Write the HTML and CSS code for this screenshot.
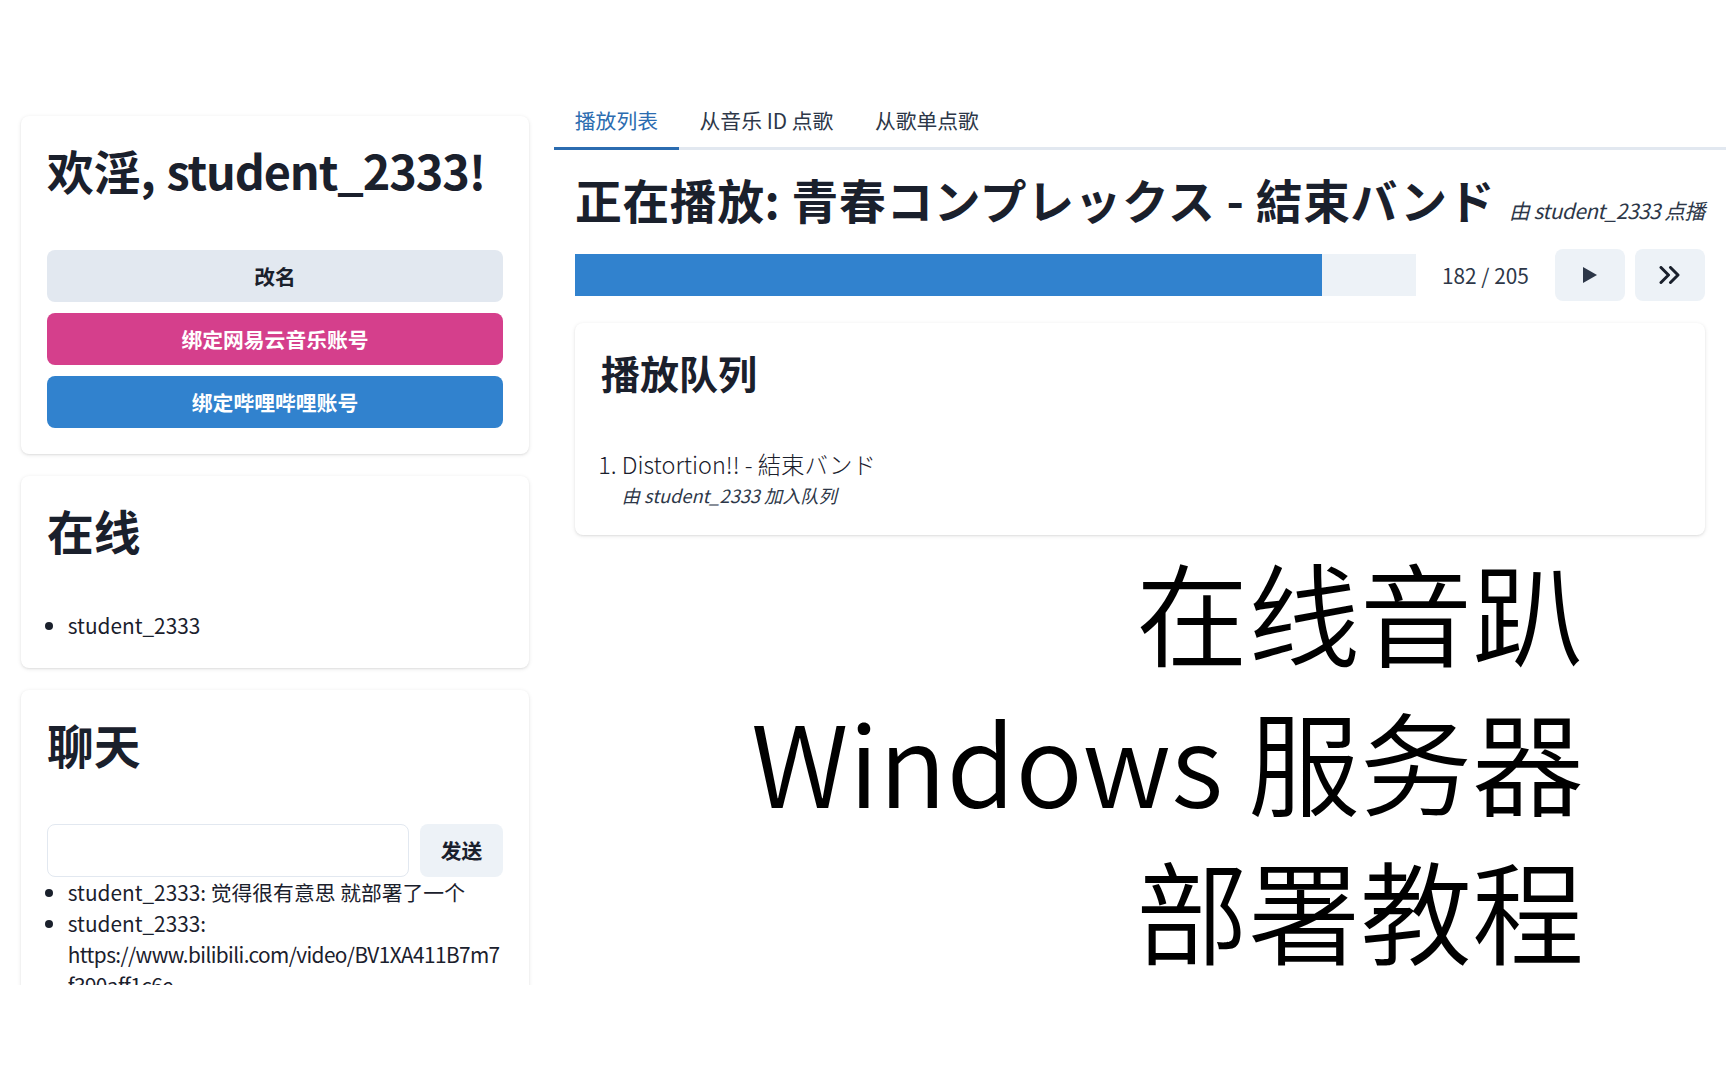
FILE: index.html
```html
<!DOCTYPE html>
<html lang="zh-CN">
<head>
  <meta charset="UTF-8">
  <title>在线音趴</title>
  <link rel="stylesheet" href="styles.css">
</head>
<body>
  <div class="frame">
    <div class="layout">
      <aside class="side">
        <section class="card">
          <div class="card-head">
            <h2 class="card-title">欢淫, <span class="name">student_2333!</span></h2>
          </div>
          <div class="card-body stack">
            <button class="btn btn-gray">改名</button>
            <button class="btn btn-pink">绑定网易云音乐账号</button>
            <button class="btn btn-blue">绑定哔哩哔哩账号</button>
          </div>
        </section>

        <section class="card">
          <div class="card-head">
            <h2 class="card-title">在线</h2>
          </div>
          <div class="card-body">
            <ul class="list">
              <li>student_2333</li>
            </ul>
          </div>
        </section>

        <section class="card">
          <div class="card-head">
            <h2 class="card-title">聊天</h2>
          </div>
          <div class="card-body">
            <div class="chat-form">
              <input class="chat-input" type="text">
              <button class="btn btn-light send">发送</button>
            </div>
            <ul class="list chat-log">
              <li>student_2333: 觉得很有意思 就部署了一个</li>
              <li>student_2333: <span class="url">https://www.bilibili.com/video/BV1XA411B7m7f390aff1c6e</span></li>
            </ul>
          </div>
        </section>
      </aside>

      <main class="main">
        <nav class="tabs">
          <span class="tab active">播放列表</span>
          <span class="tab">从音乐 ID 点歌</span>
          <span class="tab">从歌单点歌</span>
        </nav>

        <div class="panel">
          <h2 class="now">正在播放: 青春コンプレックス - 結束バンド<span class="now-by">由 student_2333 点播</span></h2>

          <div class="player">
            <div class="track"><div class="fill" style="width: 88.78%"></div></div>
            <span class="time">182 / 205</span>
            <div class="controls">
              <button class="btn btn-light icon-btn" aria-label="播放">
                <svg width="16" height="16" viewBox="0 0 16 16"><polygon points="1,0 15,8 1,16" fill="#2D3748"/></svg>
              </button>
              <button class="btn btn-light icon-btn" aria-label="下一首">
                <svg width="22" height="18" viewBox="0 0 22 18" fill="none" stroke="#1A202C" stroke-width="3" stroke-linecap="round" stroke-linejoin="round"><polyline points="2,1.5 9.5,9 2,16.5"/><polyline points="11.5,1.5 19,9 11.5,16.5"/></svg>
              </button>
            </div>
          </div>

          <section class="card queue">
            <div class="card-head">
              <h2 class="card-title small">播放队列</h2>
            </div>
            <div class="card-body">
              <ol class="list queue-list">
                <li>
                  Distortion!! - 結束バンド
                  <div class="queued-by">由 student_2333 加入队列</div>
                </li>
              </ol>
            </div>
          </section>
        </div>
      </main>
    </div>

    <div class="banner">
      <div>在线音趴</div>
      <div>Windows 服务器</div>
      <div>部署教程</div>
    </div>
  </div>
</body>
</html>
```

FILE: styles.css
```css
body {
  margin: 0;
  font-family: "Noto Sans CJK SC", sans-serif;
  font-size: 20.8px;
  line-height: 1.5;
  color: #1A202C;
  background: #fff;
}

.frame {
  position: relative;
  height: 985px;
  overflow: hidden;
}

.layout {
  display: grid;
  grid-template-columns: 508px 1fr;
  column-gap: 25px;
  align-items: start;
  padding: 95px 3px 0 21px;
}

.side {
  margin-top: 21px;
  display: flex;
  flex-direction: column;
  gap: 22px;
}

.card {
  background: #fff;
  border-radius: 8px;
  box-shadow: 0 1px 4px rgba(0,0,0,0.1), 0 1px 2px rgba(0,0,0,0.06);
}

.card-head {
  padding: 26px 26px 0;
}

.card-body {
  padding: 52px 26px 26px;
}

.card-title {
  margin: 0;
  font-size: 46.8px;
  line-height: 1.2;
  font-weight: 700;
}

.card-title.small {
  font-size: 39px;
}

.name {
  letter-spacing: -1.1px;
}

.stack {
  display: flex;
  flex-direction: column;
  gap: 11px;
}

.btn {
  display: flex;
  align-items: center;
  justify-content: center;
  height: 52px;
  padding: 0 21px;
  border: 0;
  border-radius: 8px;
  font-family: inherit;
  font-size: 20.8px;
  font-weight: 700;
  white-space: nowrap;
  color: #1A202C;
}

.btn-gray { background: #E2E8F0; }
.btn-light { background: #EDF2F7; }
.btn-pink { background: #D53F8C; color: #fff; }
.btn-blue { background: #3182CE; color: #fff; }

.list {
  margin: 0 0 0 20.8px;
  padding: 0;
}

.chat-form {
  display: flex;
  gap: 11px;
}

.chat-input {
  flex: 1;
  height: 53px;
  box-sizing: border-box;
  border: 1px solid #E2E8F0;
  border-radius: 8px;
  font: inherit;
}

.send {
  width: 83px;
  height: 53px;
  padding: 0;
}

.chat-log {
  overflow-wrap: break-word;
}

.url {
  letter-spacing: -0.6px;
}

.tabs {
  display: flex;
  border-bottom: 3px solid #E2E8F0;
}

.tab {
  padding: 10.4px 20.8px;
  margin-bottom: -3px;
  border-bottom: 3px solid transparent;
  color: #2D3748;
}

.tab.active {
  color: #2B6CB0;
  border-bottom-color: #2B6CB0;
}

.panel {
  padding: 21px;
}

.now {
  margin: 0;
  font-size: 46.8px;
  line-height: 1.2;
  font-weight: 700;
  letter-spacing: 0.6px;
  white-space: nowrap;
}

.now-by {
  margin-left: 14px;
  font-size: 20.8px;
  font-style: italic;
  font-weight: 400;
  letter-spacing: -0.5px;
  color: #2D3748;
}

.player {
  display: flex;
  align-items: center;
  gap: 26px;
  margin-top: 22px;
}

.track {
  flex: 1;
  height: 42px;
  background: #EDF2F7;
}

.fill {
  height: 100%;
  background: #3182CE;
}

.time {
  color: #2D3748;
}

.controls {
  display: flex;
  gap: 10px;
}

.icon-btn {
  width: 70px;
  padding: 0;
}

.queue {
  margin-top: 22px;
}

.queue-list {
  font-size: 23.4px;
  font-weight: 300;
  line-height: 1.45;
}

.queued-by {
  font-size: 18.2px;
  font-style: italic;
  font-weight: 400;
  line-height: 1.5;
  color: #2D3748;
}

.banner {
  position: absolute;
  top: 536px;
  right: 144px;
  text-align: right;
  font-size: 112px;
  line-height: 149px;
  font-weight: 350;
  color: #000;
}
```
